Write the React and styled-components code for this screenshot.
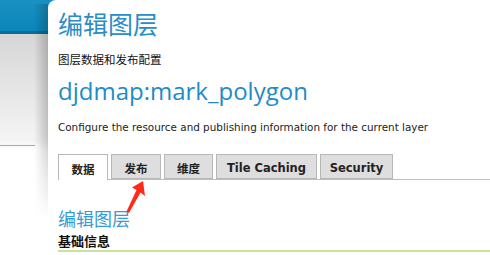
import React from "react";
import styled, { createGlobalStyle } from "styled-components";

const Global = createGlobalStyle`
  html, body { margin: 0; padding: 0; }
  body {
    width: 490px; height: 255px; overflow: hidden;
    background:
      linear-gradient(#1890c2 0, #0c86b8 31px, #0a6d97 31px, #0a6d97 34px, transparent 34px),
      linear-gradient(#d6d6d6 34px, #f4f4f4 140px, #ffffff 150px);
    font-family: "DejaVu Sans", Verdana, sans-serif;
  }
`;

const Page = styled.div`
  display: flex;
  height: 255px;
`;

const Sidebar = styled.div`
  width: 48px;
  flex: none;
  padding-top: 145px;
  box-sizing: border-box;
`;

const SideRule = styled.div`
  width: 35px;
  height: 1px;
  background: #a4b08a;
`;

const Panel = styled.div`
  flex: 1;
  background: #fff;
  border-top-left-radius: 8px;
  padding: 8px 0 0 10px;
  position: relative;

  &::before {
    content: "";
    position: absolute;
    left: -14px;
    top: 4px;
    width: 14px;
    height: 215px;
    background: linear-gradient(to right, rgba(0, 0, 0, 0), rgba(0, 0, 0, 0.2));
    -webkit-mask-image: linear-gradient(#000 60%, transparent 100%);
    mask-image: linear-gradient(#000 60%, transparent 100%);
  }
`;

const Title = styled.h1`
  margin: 0;
  font: 400 25px/30px "Noto Sans CJK SC", sans-serif;
  color: #2a8dc6;
`;

const Sub = styled.div`
  margin-top: 14px;
  font: 400 11.5px/14px "Noto Sans CJK SC", sans-serif;
  color: #111;
`;

const LayerName = styled.h2`
  margin: 10px 0 0;
  font: 400 24px/30px "Open Sans", sans-serif;
  color: #1f8cc6;
`;

const Desc = styled.div`
  margin-top: 14px;
  font: 400 10.4px/14px "DejaVu Sans", Verdana, sans-serif;
  color: #222;
`;

const Tabs = styled.div`
  display: flex;
  gap: 3px;
  margin-top: 20px;
  border-bottom: 1px solid #bdbdbd;
  height: 25px;
`;

const Tab = styled.div`
  box-sizing: border-box;
  height: ${(p) => (p.$active ? "26px" : "25px")};
  width: ${(p) => p.$w}px;
  display: flex;
  align-items: center;
  justify-content: center;
  background: ${(p) => (p.$active ? "#fff" : "#dedede")};
  border: 1px solid #b8b8b8;
  border-bottom: ${(p) => (p.$active ? "none" : "1px solid #b8b8b8")};
  font: 700 11.5px "DejaVu Sans", "Noto Sans CJK SC", sans-serif;
  color: #222;
  padding-top: 2px;
`;

const Section = styled.div`
  margin-top: 26px;
  font: 400 18px/25px "Noto Sans CJK SC", sans-serif;
  color: #3a9ad2;
`;

const SectionSub = styled.div`
  font: 700 13px/19px "Noto Sans CJK SC", sans-serif;
  color: #111;
  border-bottom: 2px solid #c8e2a0;
`;

const Arrow = styled.svg`
  position: absolute;
  left: 74px;
  top: 179px;
`;

export default function App() {
  return (
    <>
      <Global />
      <Page>
        <Sidebar>
          <SideRule />
        </Sidebar>
        <Panel>
          <Title>编辑图层</Title>
          <Sub>图层数据和发布配置</Sub>
          <LayerName>djdmap:mark_polygon</LayerName>
          <Desc>Configure the resource and publishing information for the current layer</Desc>
          <Tabs>
            <Tab $active $w={50}>数据</Tab>
            <Tab $w={50}>发布</Tab>
            <Tab $w={49}>维度</Tab>
            <Tab $w={101}>Tile Caching</Tab>
            <Tab $w={73}>Security</Tab>
          </Tabs>
          <Section>编辑图层</Section>
          <SectionSub>基础信息</SectionSub>
          <Arrow width="28" height="36" viewBox="0 0 28 36">
            <path d="M21 2 L23 17 L18.5 13.5 L7 34 L4.5 32.5 L14.5 11 L10 8.5 Z" fill="#ff2a1a" />
          </Arrow>
        </Panel>
      </Page>
    </>
  );
}
